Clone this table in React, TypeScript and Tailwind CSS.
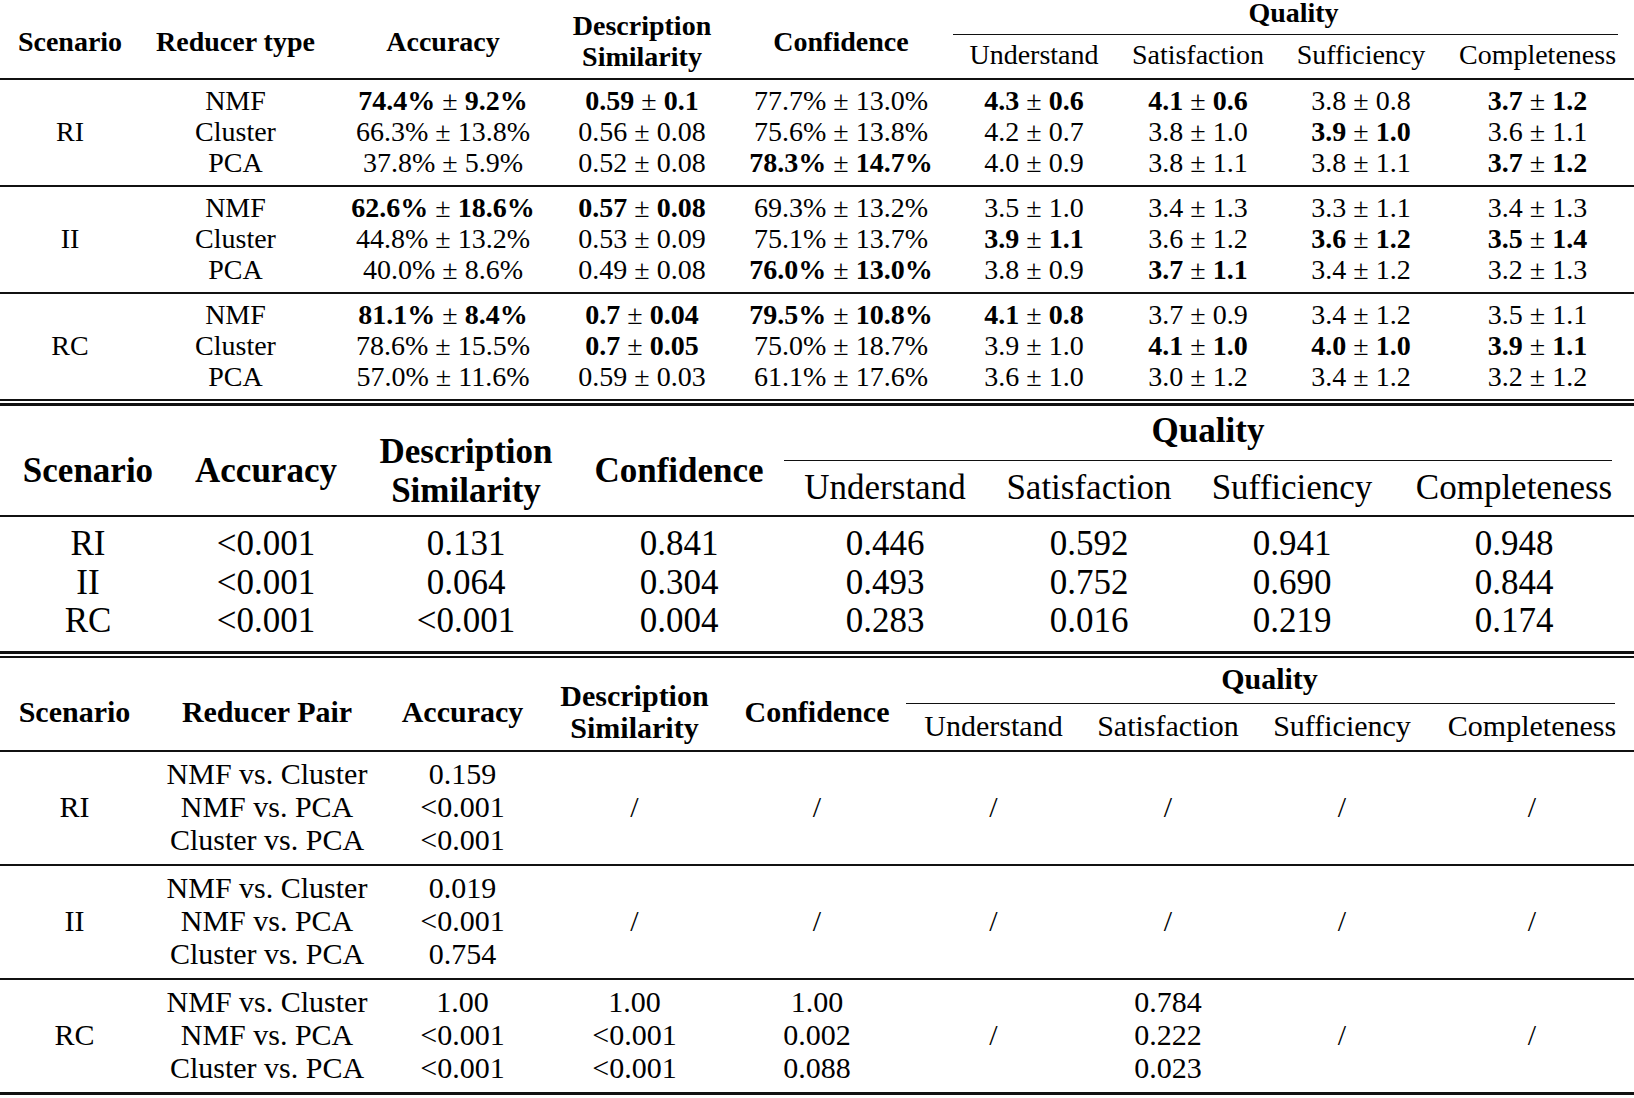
import React from "react";

const T1 = "grid grid-cols-[140px_191px_224px_174px_224px_162px_166px_160px_193px]";
const T2 = "grid grid-cols-[176px_180px_220px_206px_206px_202px_204px_240px]";
const T3 = "grid grid-cols-[149px_236px_155px_189px_176px_177px_172px_176px_204px]";

function PM({ v }: { v: string }) {
  const bold = v.startsWith("*");
  const s = bold ? v.slice(1) : v;
  const [a, b] = s.split("|");
  if (bold)
    return (
      <span className="whitespace-nowrap">
        <b>{a}</b> ± <b>{b}</b>
      </span>
    );
  return (
    <span className="whitespace-nowrap">
      {a} ± {b}
    </span>
  );
}

const Rule = ({ h }: { h: string }) => <div className={`w-full bg-[#111] ${h}`} />;

const t1Groups: { s: string; rows: string[][] }[] = [
  {
    s: "RI",
    rows: [
      ["NMF", "*74.4%|9.2%", "*0.59|0.1", "77.7%|13.0%", "*4.3|0.6", "*4.1|0.6", "3.8|0.8", "*3.7|1.2"],
      ["Cluster", "66.3%|13.8%", "0.56|0.08", "75.6%|13.8%", "4.2|0.7", "3.8|1.0", "*3.9|1.0", "3.6|1.1"],
      ["PCA", "37.8%|5.9%", "0.52|0.08", "*78.3%|14.7%", "4.0|0.9", "3.8|1.1", "3.8|1.1", "*3.7|1.2"],
    ],
  },
  {
    s: "II",
    rows: [
      ["NMF", "*62.6%|18.6%", "*0.57|0.08", "69.3%|13.2%", "3.5|1.0", "3.4|1.3", "3.3|1.1", "3.4|1.3"],
      ["Cluster", "44.8%|13.2%", "0.53|0.09", "75.1%|13.7%", "*3.9|1.1", "3.6|1.2", "*3.6|1.2", "*3.5|1.4"],
      ["PCA", "40.0%|8.6%", "0.49|0.08", "*76.0%|13.0%", "3.8|0.9", "*3.7|1.1", "3.4|1.2", "3.2|1.3"],
    ],
  },
  {
    s: "RC",
    rows: [
      ["NMF", "*81.1%|8.4%", "*0.7|0.04", "*79.5%|10.8%", "*4.1|0.8", "3.7|0.9", "3.4|1.2", "3.5|1.1"],
      ["Cluster", "78.6%|15.5%", "*0.7|0.05", "75.0%|18.7%", "3.9|1.0", "*4.1|1.0", "*4.0|1.0", "*3.9|1.1"],
      ["PCA", "57.0%|11.6%", "0.59|0.03", "61.1%|17.6%", "3.6|1.0", "3.0|1.2", "3.4|1.2", "3.2|1.2"],
    ],
  },
];

const t2Rows = [
  ["RI", "<0.001", "0.131", "0.841", "0.446", "0.592", "0.941", "0.948"],
  ["II", "<0.001", "0.064", "0.304", "0.493", "0.752", "0.690", "0.844"],
  ["RC", "<0.001", "<0.001", "0.004", "0.283", "0.016", "0.219", "0.174"],
];

const pairs = ["NMF vs. Cluster", "NMF vs. PCA", "Cluster vs. PCA"];
const t3Groups: { s: string; cols: (string[] | string)[] }[] = [
  { s: "RI", cols: [["0.159", "<0.001", "<0.001"], "/", "/", "/", "/", "/", "/"] },
  { s: "II", cols: [["0.019", "<0.001", "0.754"], "/", "/", "/", "/", "/", "/"] },
  {
    s: "RC",
    cols: [
      ["1.00", "<0.001", "<0.001"],
      ["1.00", "<0.001", "<0.001"],
      ["1.00", "0.002", "0.088"],
      "/",
      ["0.784", "0.222", "0.023"],
      "/",
      "/",
    ],
  },
];

function Table1() {
  const sub = ["Understand", "Satisfaction", "Sufficiency", "Completeness"];
  const subCols = ["col-start-6", "col-start-7", "col-start-8", "col-start-9"];
  return (
    <div className="text-[28px]">
      <div className={`${T1} grid-rows-[35px_43px]`}>
        <div className="row-span-2 col-start-1 row-start-1 flex items-center justify-center font-bold pt-[6px]">Scenario</div>
        <div className="row-span-2 col-start-2 row-start-1 flex items-center justify-center font-bold pt-[6px]">Reducer type</div>
        <div className="row-span-2 col-start-3 row-start-1 flex items-center justify-center font-bold pt-[6px]">Accuracy</div>
        <div className="row-span-2 col-start-4 row-start-1 flex flex-col items-center justify-center font-bold leading-[31px] pt-[4px]">
          <span>Description</span>
          <span>Similarity</span>
        </div>
        <div className="row-span-2 col-start-5 row-start-1 flex items-center justify-center font-bold pt-[6px]">Confidence</div>
        <div className="col-start-6 col-span-4 row-start-1 flex flex-col">
          <div className="flex-1 flex justify-center items-start leading-[26px] font-bold">Quality</div>
          <div className="mr-[16px] h-[1.5px] bg-[#111]" />
        </div>
        {sub.map((s, i) => (
          <div key={s} className={`${subCols[i]} row-start-2 flex justify-center items-start pt-[5px] leading-[30px]`}>
            {s}
          </div>
        ))}
      </div>
      <Rule h="h-[2px]" />
      {t1Groups.map((g, gi) => (
        <React.Fragment key={g.s}>
          <div className={`${T1} h-[105px]`}>
            <div className="flex items-center justify-center pb-[1px]">{g.s}</div>
            {[0, 1, 2, 3, 4, 5, 6, 7].map((c) => (
              <div key={c} className="flex flex-col items-center pt-[4.5px] leading-[31px]">
                {g.rows.map((r, ri) => (
                  <div key={ri}>{c === 0 ? r[0] : <PM v={r[c]} />}</div>
                ))}
              </div>
            ))}
          </div>
          {gi < 2 ? <Rule h="h-[2px]" /> : null}
        </React.Fragment>
      ))}
      <Rule h="h-[2px]" />
    </div>
  );
}

function Table2() {
  const sub = ["Understand", "Satisfaction", "Sufficiency", "Completeness"];
  const subCols = ["col-start-5", "col-start-6", "col-start-7", "col-start-8"];
  return (
    <div className="text-[35px]">
      <div className="h-[2px]" />
      <Rule h="h-[3px]" />
      <div className={`${T2} grid-rows-[55px_54px]`}>
        <div className="row-span-2 col-start-1 row-start-1 flex items-center justify-center font-bold pt-[22px]">Scenario</div>
        <div className="row-span-2 col-start-2 row-start-1 flex items-center justify-center font-bold pt-[22px]">Accuracy</div>
        <div className="row-span-2 col-start-3 row-start-1 flex flex-col items-center justify-center font-bold leading-[39px] pt-[20px]">
          <span>Description</span>
          <span>Similarity</span>
        </div>
        <div className="row-span-2 col-start-4 row-start-1 flex items-center justify-center font-bold pt-[22px]">Confidence</div>
        <div className="col-start-5 col-span-4 row-start-1 flex flex-col">
          <div className="flex-1 flex justify-center items-start pt-[6px] leading-[38px] font-bold">Quality</div>
          <div className="ml-[2px] mr-[22px] h-[1.5px] bg-[#111]" />
        </div>
        {sub.map((s, i) => (
          <div key={s} className={`${subCols[i]} row-start-2 flex justify-center items-start pt-[8px] leading-[38px]`}>
            {s}
          </div>
        ))}
      </div>
      <Rule h="h-[2px]" />
      <div className={`${T2} h-[134px] pt-[8px]`}>
        {[0, 1, 2, 3, 4, 5, 6, 7].map((c) => (
          <div key={c} className="flex flex-col items-center leading-[38.5px]">
            {t2Rows.map((r, ri) => (
              <div key={ri}>{r[c]}</div>
            ))}
          </div>
        ))}
      </div>
      <Rule h="h-[3px]" />
    </div>
  );
}

function Table3() {
  const sub = ["Understand", "Satisfaction", "Sufficiency", "Completeness"];
  const subCols = ["col-start-6", "col-start-7", "col-start-8", "col-start-9"];
  return (
    <div className="text-[30px]">
      <div className="h-[2px]" />
      <Rule h="h-[2px]" />
      <div className={`${T3} grid-rows-[46px_46px]`}>
        <div className="row-span-2 col-start-1 row-start-1 flex items-center justify-center font-bold pt-[14px]">Scenario</div>
        <div className="row-span-2 col-start-2 row-start-1 flex items-center justify-center font-bold pt-[14px]">Reducer Pair</div>
        <div className="row-span-2 col-start-3 row-start-1 flex items-center justify-center font-bold pt-[14px]">Accuracy</div>
        <div className="row-span-2 col-start-4 row-start-1 flex flex-col items-center justify-center font-bold leading-[32px] pt-[15px]">
          <span>Description</span>
          <span>Similarity</span>
        </div>
        <div className="row-span-2 col-start-5 row-start-1 flex items-center justify-center font-bold pt-[14px]">Confidence</div>
        <div className="col-start-6 col-span-4 row-start-1 flex flex-col">
          <div className="flex-1 flex justify-center items-start pt-[5px] leading-[32px] font-bold">Quality</div>
          <div className="ml-[1px] mr-[19px] h-[1.5px] bg-[#111]" />
        </div>
        {sub.map((s, i) => (
          <div key={s} className={`${subCols[i]} row-start-2 flex justify-center items-start pt-[6px] leading-[32px]`}>
            {s}
          </div>
        ))}
      </div>
      <Rule h="h-[2px]" />
      {t3Groups.map((g, gi) => (
        <React.Fragment key={g.s}>
          <div className={`${T3} h-[112px]`}>
            <div className="flex items-center justify-center pb-[3px]">{g.s}</div>
            <div className="flex flex-col items-center justify-center leading-[33px] pb-[3px]">
              {pairs.map((p) => (
                <div key={p} className="whitespace-nowrap">{p}</div>
              ))}
            </div>
            {g.cols.map((c, ci) =>
              typeof c === "string" ? (
                <div key={ci} className="flex items-center justify-center pb-[3px]">
                  {c}
                </div>
              ) : (
                <div key={ci} className="flex flex-col items-center justify-center leading-[33px] pb-[3px]">
                  {c.map((x, xi) => (
                    <div key={xi}>{x}</div>
                  ))}
                </div>
              )
            )}
          </div>
          {gi < 2 ? <Rule h="h-[2px]" /> : <Rule h="h-[3px]" />}
        </React.Fragment>
      ))}
    </div>
  );
}

export default function App() {
  return (
    <div className="w-[1634px] h-[1098px] overflow-hidden bg-white text-black font-[family-name:Liberation_Serif,Times_New_Roman,serif]">
      <Table1 />
      <Table2 />
      <Table3 />
    </div>
  );
}
